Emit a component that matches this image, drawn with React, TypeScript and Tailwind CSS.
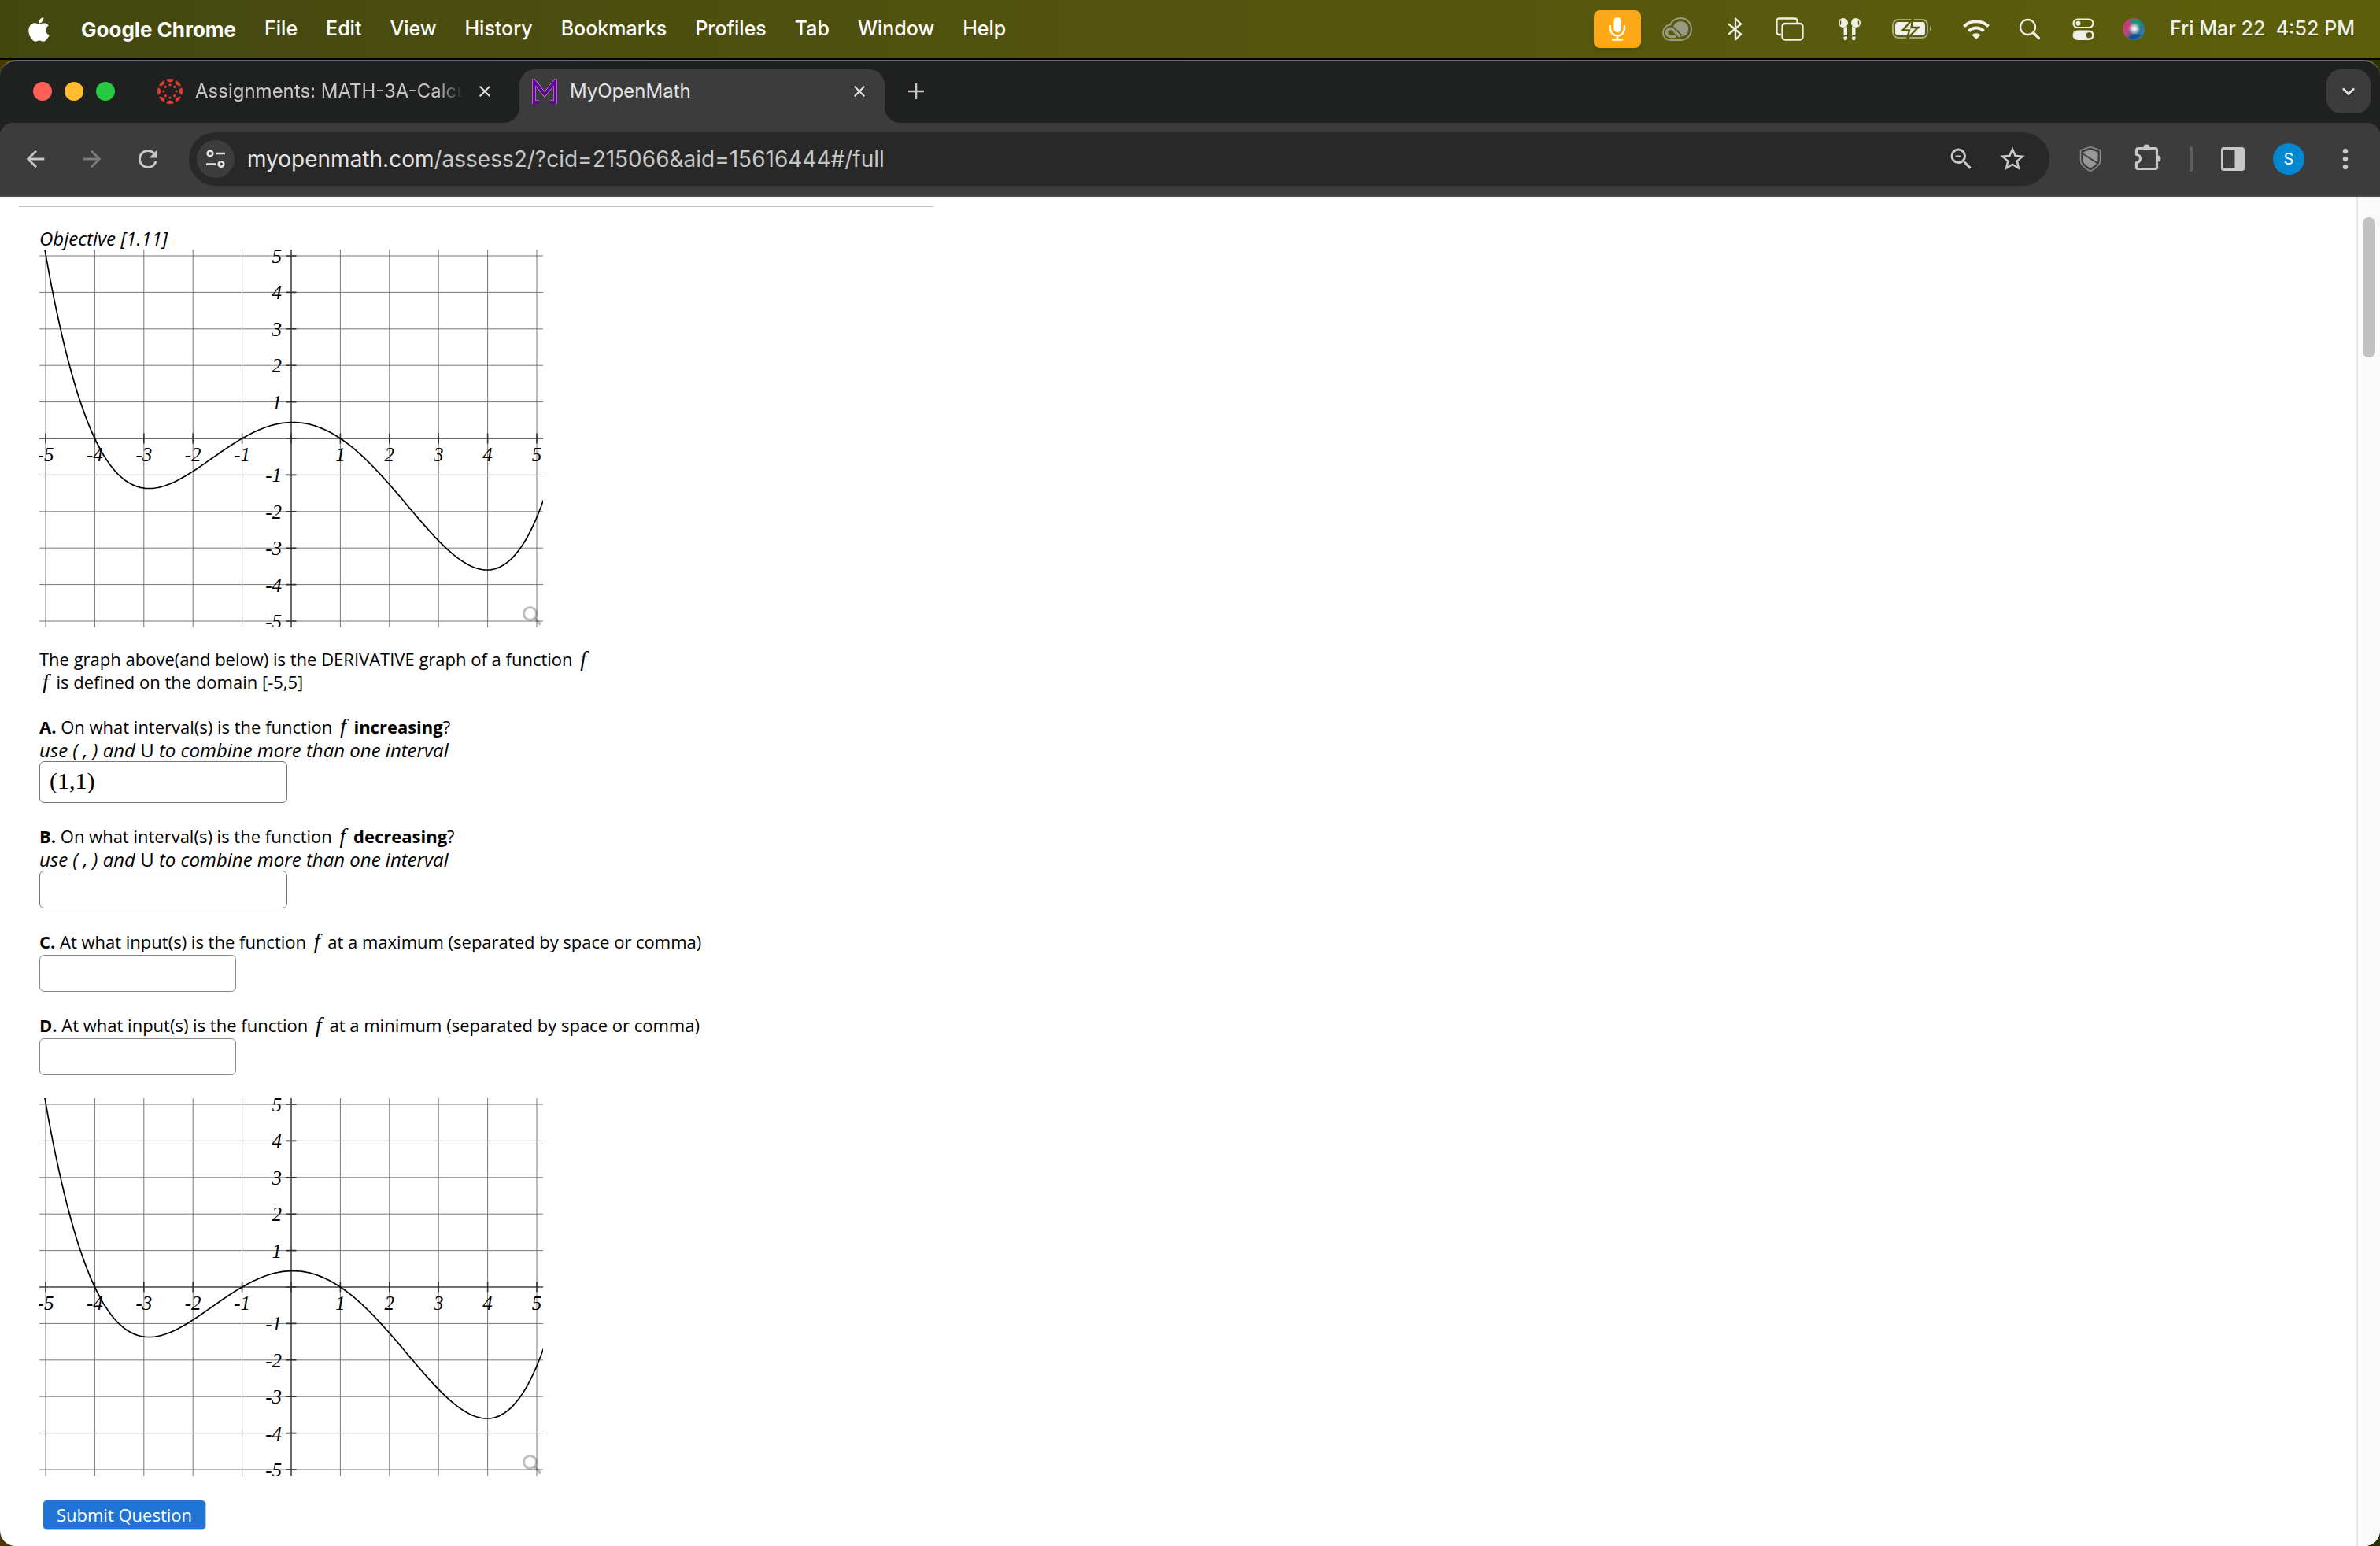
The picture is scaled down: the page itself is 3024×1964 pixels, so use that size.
import { IoLogoApple } from 'react-icons/io5'
import {
  MdArrowBack,
  MdArrowForward,
  MdClose,
  MdKeyboardArrowDown,
  MdMoreVert,
  MdRefresh,
  MdStarOutline,
  MdZoomOut,
} from 'react-icons/md'

const menus = ['File', 'Edit', 'View', 'History', 'Bookmarks', 'Profiles', 'Tab', 'Window', 'Help']

export default function App() {
  return (
    <div className="min-h-screen flex flex-col bg-linear-to-r from-[#4a3800] to-[#2b3200] font-['Inter','Liberation_Sans',sans-serif]">
      <MenuBar />
      <div className="h-0.5 bg-black" />
      <div className="flex-1 flex flex-col rounded-[20px] overflow-hidden bg-[#1f2121] border-t-2 border-[#6b6b6b]">
        <TabStrip />
        <Toolbar />
        <div className="flex-1 flex bg-white">
          <Question />
          <div className="w-[30px] shrink-0 border-l-2 border-[#e8e8e8] bg-[#fafafa] flex justify-center pt-[26px]">
            <div className="w-4 h-[178px] rounded-full bg-[#c1c1c1]" />
          </div>
        </div>
      </div>
    </div>
  )
}

function MenuBar() {
  return (
    <header className="h-[74px] flex items-center justify-between bg-linear-to-r from-[#43480f] via-[#53540f] to-[#5c5f0a] pl-8 pr-8 text-[25px] text-white text-shadow-sm">
      <nav className="flex items-center gap-9">
        <IoLogoApple size={35} />
        <button className="text-[26px] font-bold">Google Chrome</button>
        {menus.map((name) => (
          <button key={name} className="font-medium">
            {name}
          </button>
        ))}
      </nav>
      <div className="flex items-center text-[#f0f0e6]">
        <button aria-label="Microphone" className="w-[60px] h-12 rounded-lg bg-[#ffa817] flex items-center justify-center text-white shadow-md">
          <MicIcon />
        </button>
        <CloudIcon />
        <BluetoothIcon />
        <MirrorIcon />
        <PodsIcon />
        <BatteryIcon />
        <WifiIcon />
        <SpotlightIcon />
        <ControlIcon />
        <SiriIcon />
        <time className="ml-8 font-medium whitespace-pre">Fri Mar 22  4:52 PM</time>
      </div>
    </header>
  )
}

function MicIcon() {
  return (
    <svg width="24" height="32" viewBox="0 0 24 32" fill="none" stroke="currentColor" strokeWidth="2.4" strokeLinecap="round">
      <rect x="7.5" y="1" width="9" height="19" rx="4.5" fill="currentColor" stroke="none" />
      <path d="M3 12v3.5a9 9 0 0 0 18 0V12M12 25v4M6 29.5h12" />
    </svg>
  )
}

function CloudIcon() {
  return (
    <svg className="ml-[27px]" width="38" height="30" viewBox="0 0 38 30" fill="none" stroke="#989a86" strokeWidth="2">
      <path d="M10 29C5 29 1 24.8 1 19.5S5 10 10 9.5C12.5 4.500 17.500 1 23.500 1 31 1 37 7.300 37 15S31 29 23.500 29z" />
      <circle cx="23.5" cy="14.8" r="9.8" fill="#989a86" stroke="none" />
      <path d="M15.500 24.500h-5a5 5 0 1 1 3.500-8.500l9 9" stroke="#5a5c0c" strokeWidth="7" />
      <path d="M16 24.500h-5.500a5 5 0 1 1 3.500-8.500l7.500 7.500" strokeWidth="3.5" strokeLinecap="round" />
    </svg>
  )
}

function BluetoothIcon() {
  return (
    <svg className="ml-[45px]" width="20" height="30" viewBox="0 0 20 30" fill="none" stroke="currentColor" strokeWidth="2.3" strokeLinejoin="round" strokeLinecap="round">
      <path d="M2 9l15 12.500-7 7v-27l7 7L2 21" />
    </svg>
  )
}

function MirrorIcon() {
  return (
    <svg className="ml-[41px]" width="36" height="30" viewBox="0 0 36 30" fill="none" stroke="currentColor" strokeWidth="2.3">
      <path d="M7 22H4.500A3 3 0 0 1 1.500 19V4.500A3 3 0 0 1 4.500 1.500h20a3 3 0 0 1 3 3V7" />
      <rect x="8.5" y="8" width="26" height="20.5" rx="3.5" />
    </svg>
  )
}

function PodsIcon() {
  return (
    <svg className="ml-[43px]" width="30" height="30" viewBox="0 0 30 30" fill="currentColor">
      <circle cx="7" cy="7" r="6" />
      <circle cx="23" cy="7" r="6" />
      <path d="M7.500 13.500l4.500-2V23H7.500zM22.500 13.500l-4.500-2V23h4.500zM7.500 24.500H12V27a2 2 0 0 1-4.500 0zM18 24.500h4.500V27a2 2 0 0 1-4.500 0z" />
      <path d="M3.500 5v4M26.500 5v4" stroke="#5a5c0c" strokeWidth="1.5" strokeLinecap="round" />
    </svg>
  )
}

function BatteryIcon() {
  return (
    <svg className="ml-[39px]" width="52" height="28" viewBox="0 0 52 28" fill="currentColor">
      <rect x="1" y="2" width="44" height="23" rx="7" fill="none" stroke="currentColor" strokeWidth="2" opacity=".5" />
      <path d="M48 10c2.500 1 2.500 6.500 0 7.500z" opacity=".5" />
      <rect x="4" y="5" width="38" height="17" rx="4" />
      <path d="M26.500 1L13.500 15.500h8.500L19 26.500 33 12h-8.500z" stroke="#5a5c0c" strokeWidth="2.5" />
    </svg>
  )
}

function WifiIcon() {
  return (
    <svg className="ml-[37px]" width="36" height="28" viewBox="0 0 36 28" fill="none" stroke="currentColor" strokeWidth="4">
      <path d="M2.500 10.500c8.500-8.500 22.500-8.500 31 0M8.500 16.500c5.300-5.300 13.700-5.300 19 0" />
      <path d="M18 27l-5.500-5.500c3-3 8-3 11 0z" fill="currentColor" stroke="none" />
    </svg>
  )
}

function SpotlightIcon() {
  return (
    <svg className="ml-9" width="28" height="28" viewBox="0 0 28 28" fill="none" stroke="currentColor" strokeLinecap="round">
      <circle cx="11.5" cy="11.5" r="9.5" strokeWidth="2.3" />
      <path d="M19 19l6.500 6.500" strokeWidth="3.2" />
    </svg>
  )
}

function ControlIcon() {
  return (
    <svg className="ml-10" width="28" height="28" viewBox="0 0 28 28">
      <rect x="1.5" y="1.5" width="25" height="10.5" rx="5.25" fill="none" stroke="currentColor" strokeWidth="2.2" />
      <circle cx="7.5" cy="6.8" r="3" fill="currentColor" />
      <rect x=".5" y="15.5" width="27" height="12.5" rx="6.25" fill="currentColor" />
      <circle cx="21.5" cy="21.8" r="3.7" fill="#5a5c0c" />
    </svg>
  )
}

function SiriIcon() {
  return (
    <svg className="ml-9" width="28" height="28" viewBox="0 0 28 28">
      <defs>
        <linearGradient id="siri" x1="0" y1=".2" x2="1" y2=".8">
          <stop offset="0" stopColor="#d8306a" />
          <stop offset=".35" stopColor="#b04a80" />
          <stop offset=".6" stopColor="#2a6888" />
          <stop offset="1" stopColor="#2f86c4" />
        </linearGradient>
        <radialGradient id="siri-glow">
          <stop offset="0" stopColor="#fff" />
          <stop offset=".3" stopColor="#fff" stopOpacity=".8" />
          <stop offset="1" stopColor="#fff" stopOpacity="0" />
        </radialGradient>
      </defs>
      <circle cx="14" cy="14" r="14" fill="url(#siri)" />
      <path d="M8 2.500c6-3 14-1 18 6-5 3-13 2-18-6z" fill="#1f9078" />
      <path d="M7 24.500c5-5 11-5 17-3-4 5-11 7-17 3z" fill="#124a90" opacity=".8" />
      <circle cx="15" cy="13.5" r="8" fill="url(#siri-glow)" />
    </svg>
  )
}

function TabStrip() {
  return (
    <div className="h-[78px] flex pt-2.5 pr-3">
      <div className="flex items-center gap-4 h-[56px] pl-[42px]">
        <span className="size-6 rounded-full bg-[#ff5f57]" />
        <span className="size-6 rounded-full bg-[#febc2e]" />
        <span className="size-6 rounded-full bg-[#28c840]" />
      </div>
      <div className="flex items-center h-[56px] w-[494px] pl-[54px] pr-3">
        <CanvasIcon />
        <span className="ml-4 flex-1 overflow-hidden whitespace-nowrap text-2xl text-[#c7c7c7] mask-r-from-90% mask-r-to-100%">
          Assignments: MATH-3A-Calculus
        </span>
        <button aria-label="Close tab" className="ml-4 text-[#e3e3e3]">
          <MdClose size={24} />
        </button>
      </div>
      <TabFlare />
      <div className="h-[68px] w-[464px] rounded-t-[20px] bg-[#3c3c3c] flex items-center pl-4 pr-5 pb-3">
        <OpenMathIcon />
        <span className="ml-4 flex-1 text-2xl text-[#e3e3e3]">MyOpenMath</span>
        <button aria-label="Close tab" className="text-[#e3e3e3]">
          <MdClose size={24} />
        </button>
      </div>
      <TabFlare flip />
      <button aria-label="New tab" className="w-10 h-[56px] flex items-center justify-center text-[#c7c7c7]">
        <svg width="20" height="20" viewBox="0 0 20 20" stroke="currentColor" strokeWidth="2.5">
          <path d="M10 0v20M0 10h20" />
        </svg>
      </button>
      <button aria-label="Search tabs" className="ml-auto size-[56px] rounded-[18px] bg-[#3c3c3c] text-[#e3e3e3] flex items-center justify-center">
        <MdKeyboardArrowDown size={32} />
      </button>
    </div>
  )
}

function TabFlare({ flip }: { flip?: boolean }) {
  return (
    <svg className={flip ? 'self-end -scale-x-100' : 'self-end'} width="20" height="20" viewBox="0 0 20 20">
      <path d="M20 0v20H0A20 20 0 0 0 20 0z" fill="#3c3c3c" />
    </svg>
  )
}

function CanvasIcon() {
  const angles = [0, 45, 90, 135, 180, 225, 270, 315]
  return (
    <svg width="32" height="32" viewBox="0 0 32 32" fill="#e63c2e">
      {angles.map((a) => (
        <g key={a} transform={`rotate(${a} 16 16)`}>
          <path d="M11.300 .8a15.800 15.800 0 0 1 9.400 0a4.800 4.200 0 0 1-9.400 0z" />
          <circle cx="16" cy="7.9" r="1.6" />
        </g>
      ))}
    </svg>
  )
}

function OpenMathIcon() {
  return (
    <svg width="32" height="32" viewBox="0 0 32 32" fill="none">
      <path d="M9 30H2.500V3L16 20 29.500 3v27H23" stroke="#c9b3d9" strokeWidth="5" />
      <path d="M9 30H2.500V3L16 20 29.500 3v27H23" stroke="#68019b" strokeWidth="3.8" />
    </svg>
  )
}

function Toolbar() {
  return (
    <div className="bg-[#1f2121]">
      <div className="h-[94px] rounded-t-2xl bg-[#3c3c3c] border-b-2 border-[#474747] flex items-center pl-7 pr-6 text-[#c7c7c7]">
        <button aria-label="Back">
          <MdArrowBack size={34} />
        </button>
        <button aria-label="Forward" className="ml-[38px] text-[#7c7c7c]">
          <MdArrowForward size={34} />
        </button>
        <button aria-label="Reload" className="ml-9">
          <MdRefresh size={36} />
        </button>
        <div className="ml-[34px] flex-1 h-[68px] rounded-full bg-[#282828] flex items-center pl-2.5 pr-7">
          <button aria-label="Site information" className="size-12 rounded-full bg-[#3c3c3c] text-[#e3e3e3] flex items-center justify-center">
            <svg width="24" height="24" viewBox="0 0 24 24" fill="none" stroke="currentColor" strokeWidth="2.6">
              <circle cx="5" cy="5" r="3.3" />
              <path d="M12.500 5H24M0 18.500h12" />
              <circle cx="19" cy="18.5" r="3.3" />
            </svg>
          </button>
          <div className="ml-4 text-[28px] whitespace-nowrap">
            <span className="text-[#e3e3e3]">myopenmath.com</span>/assess2/?cid=215066&amp;aid=15616444#/full
          </div>
          <button aria-label="Zoom" className="ml-auto">
            <MdZoomOut size={36} />
          </button>
          <button aria-label="Bookmark this tab" className="ml-7">
            <MdStarOutline size={38} />
          </button>
        </div>
        <button aria-label="Content blocker" className="ml-[38px]">
          <ShieldIcon />
        </button>
        <button aria-label="Extensions" className="ml-[42px]">
          <PuzzleIcon />
        </button>
        <div className="ml-9 w-1 h-8 rounded-full bg-[#5f5f5f]" />
        <button aria-label="Side panel" className="ml-9">
          <svg width="30" height="30" viewBox="0 0 30 30">
            <rect x="1.5" y="1.5" width="27" height="27" rx="2" fill="none" stroke="currentColor" strokeWidth="3" />
            <path d="M17.500 1.500h11v27h-11z" fill="currentColor" />
          </svg>
        </button>
        <button aria-label="Profile" className="ml-9 size-10 rounded-full bg-[#0288d1] text-white text-xl flex items-center justify-center">
          S
        </button>
        <button aria-label="Menu" className="ml-8">
          <MdMoreVert size={40} />
        </button>
      </div>
    </div>
  )
}

function ShieldIcon() {
  return (
    <svg width="28" height="34" viewBox="0 0 28 34" fill="none">
      <path d="M14 1.500L26.500 6v13c0 5-5 9.500-12.500 13.500C6.500 28.500 1.500 24 1.500 19V6z" stroke="#8c8c8c" strokeWidth="1.5" />
      <path d="M14 5l9.500 3.500V18c0 4-4 7.500-9.500 10.500C8.500 25.500 4.500 22 4.500 18V8.500z" fill="#989898" />
      <path d="M4 10l20 13" stroke="#3c3c3c" strokeWidth="1.8" />
    </svg>
  )
}

function PuzzleIcon() {
  return (
    <svg className="mb-1" width="34" height="34" viewBox="0 0 34 34" fill="none" stroke="currentColor" strokeWidth="3.2" strokeLinejoin="round">
      <path d="M2.500 7.500a2 2 0 0 1 2-2h22a2 2 0 0 1 2 2v22a2 2 0 0 1-2 2h-22a2 2 0 0 1-2-2V23.500a5 5 0 0 0 0-10z" />
      <path d="M11.500 4.500a4 4 0 0 1 8 0zM29.500 14.500a4 4 0 0 1 0 8z" fill="currentColor" stroke="none" />
    </svg>
  )
}

function Question() {
  return (
    <main className="flex-1 pl-6 pt-3 font-['Open_Sans',sans-serif] text-[22px] leading-[29px] text-black">
      <hr className="w-[1162px] border-t border-[#c4c4c4]" />
      <div className="pl-[26px] pt-[25px]">
        <p className="italic text-2xl leading-[29px]">Objective [1.11]</p>
        <Graph />
        <p className="mt-[26px]">
          The graph above(and below) is the DERIVATIVE graph of a function <F />
          <br />
          <F /> is defined on the domain [-5,5]
        </p>
        <IntervalField id="increasing" letter="A" word="increasing" value="(1,1)" />
        <IntervalField id="decreasing" letter="B" word="decreasing" value="" />
        <InputField id="maximum" letter="C" word="maximum" />
        <InputField id="minimum" letter="D" word="minimum" />
        <div className="pt-[29px]">
          <Graph />
        </div>
        <button className="mt-[30px] ml-1 h-[39px] w-[208px] rounded-md border border-[#c4c4c4] bg-[#1f74d4] text-white font-medium">
          Submit Question
        </button>
      </div>
    </main>
  )
}

function F() {
  return <span className="px-1 font-['Liberation_Serif',serif] italic text-[28px] leading-none">f</span>
}

interface FieldProps {
  id: string
  letter: string
  word: string
  value?: string
}

function IntervalField({ id, letter, word, value }: FieldProps) {
  return (
    <div className="mt-7">
      <label htmlFor={id} className="block">
        <b>{letter}.</b> On what interval(s) is the function <F /> <b>{word}</b>?
        <span className="block text-2xl leading-[29px]">
          <i>use ( , ) and</i> U <i>to combine more than one interval</i>
        </span>
      </label>
      <input
        id={id}
        defaultValue={value}
        className={
          value
            ? "block w-[315px] h-[53px] px-3 pb-1 rounded-md border border-[#777777] font-['Liberation_Serif',serif] text-[30px]"
            : "block w-[315px] h-12 px-3 pb-1 rounded-md border border-[#777777] font-['Liberation_Serif',serif] text-[30px]"
        }
      />
    </div>
  )
}

function InputField({ id, letter, word }: FieldProps) {
  return (
    <div className="mt-7">
      <label htmlFor={id} className="block pb-0.5">
        <b>{letter}.</b> At what input(s) is the function <F /> at a {word} (separated by space or comma)
      </label>
      <input id={id} className="block w-[250px] h-[47px] px-3 rounded-md border border-[#888888]" />
    </div>
  )
}

const UNIT_X = 62.4
const UNIT_Y = 46.4
const ticks = [-5, -4, -3, -2, -1, 0, 1, 2, 3, 4, 5]

const toX = (x: number) => 320 + x * UNIT_X
const toY = (y: number) => 240 - y * UNIT_Y
const derivative = (x: number) => 0.02 * (x + 4) * (x + 1) * (x - 1) * (x - 5.5)

const points = Array.from({ length: 207 }, (_, i) => {
  const x = -5.02 + i * 0.05
  return `${toX(x).toFixed(1)},${toY(derivative(x)).toFixed(1)}`
}).join(' ')

function Graph() {
  return (
    <div className="relative w-[640px]">
      <svg className="block" width="640" height="480" viewBox="0 0 640 480">
        <g stroke="#777" strokeWidth="1">
          {ticks.map((t) => (
            <path key={t} d={`M${toX(t)} 0V480M0 ${toY(t)}H640`} />
          ))}
        </g>
        <g stroke="#333" strokeWidth="1.6">
          <path d="M320 0V480M0 240H640" stroke="#555" />
          {ticks.map((t) => (
            <path key={t} d={`M${toX(t)} 233.500v13M313.500 ${toY(t)}h13`} />
          ))}
        </g>
        <polyline points={points} fill="none" stroke="#000" strokeWidth="1.7" />
        <g className="font-['Liberation_Serif',serif] italic text-[25px]">
          {ticks
            .filter((t) => t !== 0)
            .map((t) => (
              <g key={t}>
                <text x={toX(t)} y="269" textAnchor="middle">
                  {t}
                </text>
                <text x="308" y={toY(t) + 9} textAnchor="end">
                  {t}
                </text>
              </g>
            ))}
        </g>
      </svg>
      <button aria-label="Enlarge graph" className="absolute right-0.5 bottom-0.5 text-black/25">
        <svg className="block" width="24" height="25" viewBox="0 0 24 25" fill="none" stroke="currentColor" strokeWidth="3">
          <circle cx="9.5" cy="9.5" r="8" />
          <path d="M15.500 15.500l7.500 8" strokeWidth="3.6" />
        </svg>
      </button>
    </div>
  )
}
